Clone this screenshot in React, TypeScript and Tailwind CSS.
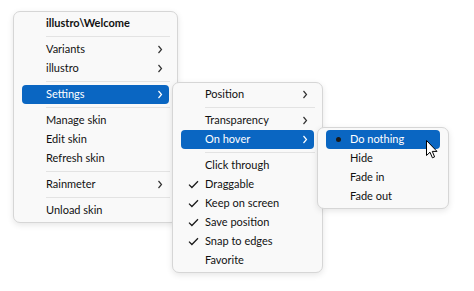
import React from 'react'

type Item =
  | { kind: 'sep' }
  | { kind: 'item'; label: string; sub?: boolean; active?: boolean; bold?: boolean; check?: boolean; dot?: boolean }

const Chevron = ({ white }: { white?: boolean }) => (
  <svg width="6" height="9" viewBox="0 0 6 9" className="shrink-0">
    <path d="M1.5 1 L4.5 4.5 L1.5 8" fill="none" stroke={white ? '#ffffff' : '#333333'} strokeWidth="1.2" />
  </svg>
)

const Check = () => (
  <svg width="11" height="9" viewBox="0 0 11 9">
    <path d="M1 4.6 L3.9 7.5 L10 1.3" fill="none" stroke="#1a1a1a" strokeWidth="1.3" />
  </svg>
)

function Menu({ items, className }: { items: Item[]; className: string }) {
  return (
    <div
      className={`absolute rounded-[7px] border border-[#d6d6d6] bg-[#f9f9f9] py-[2px] shadow-[0_2px_6px_rgba(0,0,0,0.10)] ${className}`}
    >
      {items.map((it, i) =>
        it.kind === 'sep' ? (
          <div key={i} className="h-[7px] flex items-center pl-[32px] pr-[7px]">
            <div className="h-px w-full bg-[#e3e3e3]" />
          </div>
        ) : (
          <div key={i} className="px-[8px]">
            <div
              className={`relative flex h-[19px] items-center rounded-[4px] pr-[6px] ${
                it.active ? 'bg-[#0a66c2] text-white' : 'text-[#111111]'
              }`}
            >
              <div className="flex w-[24px] shrink-0 items-center justify-center">
                {it.check && <Check />}
                {it.dot && <div className="h-[5px] w-[5px] rounded-full bg-[#1a1a1a]" />}
              </div>
              <span className={`flex-1 whitespace-nowrap pb-[1px] ${it.bold ? 'font-bold' : ''}`}>{it.label}</span>
              {it.sub && <Chevron white={it.active} />}
            </div>
          </div>
        )
      )}
    </div>
  )
}

const S: Item = { kind: 'sep' }
const I = (label: string, o: Partial<Extract<Item, { kind: 'item' }>> = {}): Item => ({ kind: 'item', label, ...o })

export default function App() {
  const main: Item[] = [
    I('illustro\\Welcome', { bold: true }),
    S,
    I('Variants', { sub: true }),
    I('illustro', { sub: true }),
    S,
    I('Settings', { sub: true, active: true }),
    S,
    I('Manage skin'),
    I('Edit skin'),
    I('Refresh skin'),
    S,
    I('Rainmeter', { sub: true }),
    S,
    I('Unload skin'),
  ]
  const settings: Item[] = [
    I('Position', { sub: true }),
    S,
    I('Transparency', { sub: true }),
    I('On hover', { sub: true, active: true }),
    S,
    I('Click through'),
    I('Draggable', { check: true }),
    I('Keep on screen', { check: true }),
    I('Save position', { check: true }),
    I('Snap to edges', { check: true }),
    I('Favorite'),
  ]
  const hover: Item[] = [
    I('Do nothing', { active: true, dot: true }),
    I('Hide'),
    I('Fade in'),
    I('Fade out'),
  ]
  return (
    <div
      className="relative h-[291px] w-[474px] overflow-hidden bg-white text-[11px]"
      style={{ fontFamily: 'Lato, "Noto Sans", sans-serif' }}
    >
      <Menu items={main} className="left-[13px] top-[11px] w-[165px]" />
      <Menu items={settings} className="left-[172px] top-[82px] w-[151px]" />
      <Menu items={hover} className="left-[317px] top-[127px] w-[132px]" />
      <svg className="absolute left-[426px] top-[140px]" width="13" height="19" viewBox="0 0 13 19">
        <path
          d="M0.5 0.5 L0.5 15.5 L4 12.2 L6.4 17.8 L8.6 16.9 L6.3 11.4 L11 11.4 Z"
          fill="#ffffff"
          stroke="#000000"
          strokeWidth="1"
          strokeLinejoin="round"
        />
      </svg>
    </div>
  )
}
